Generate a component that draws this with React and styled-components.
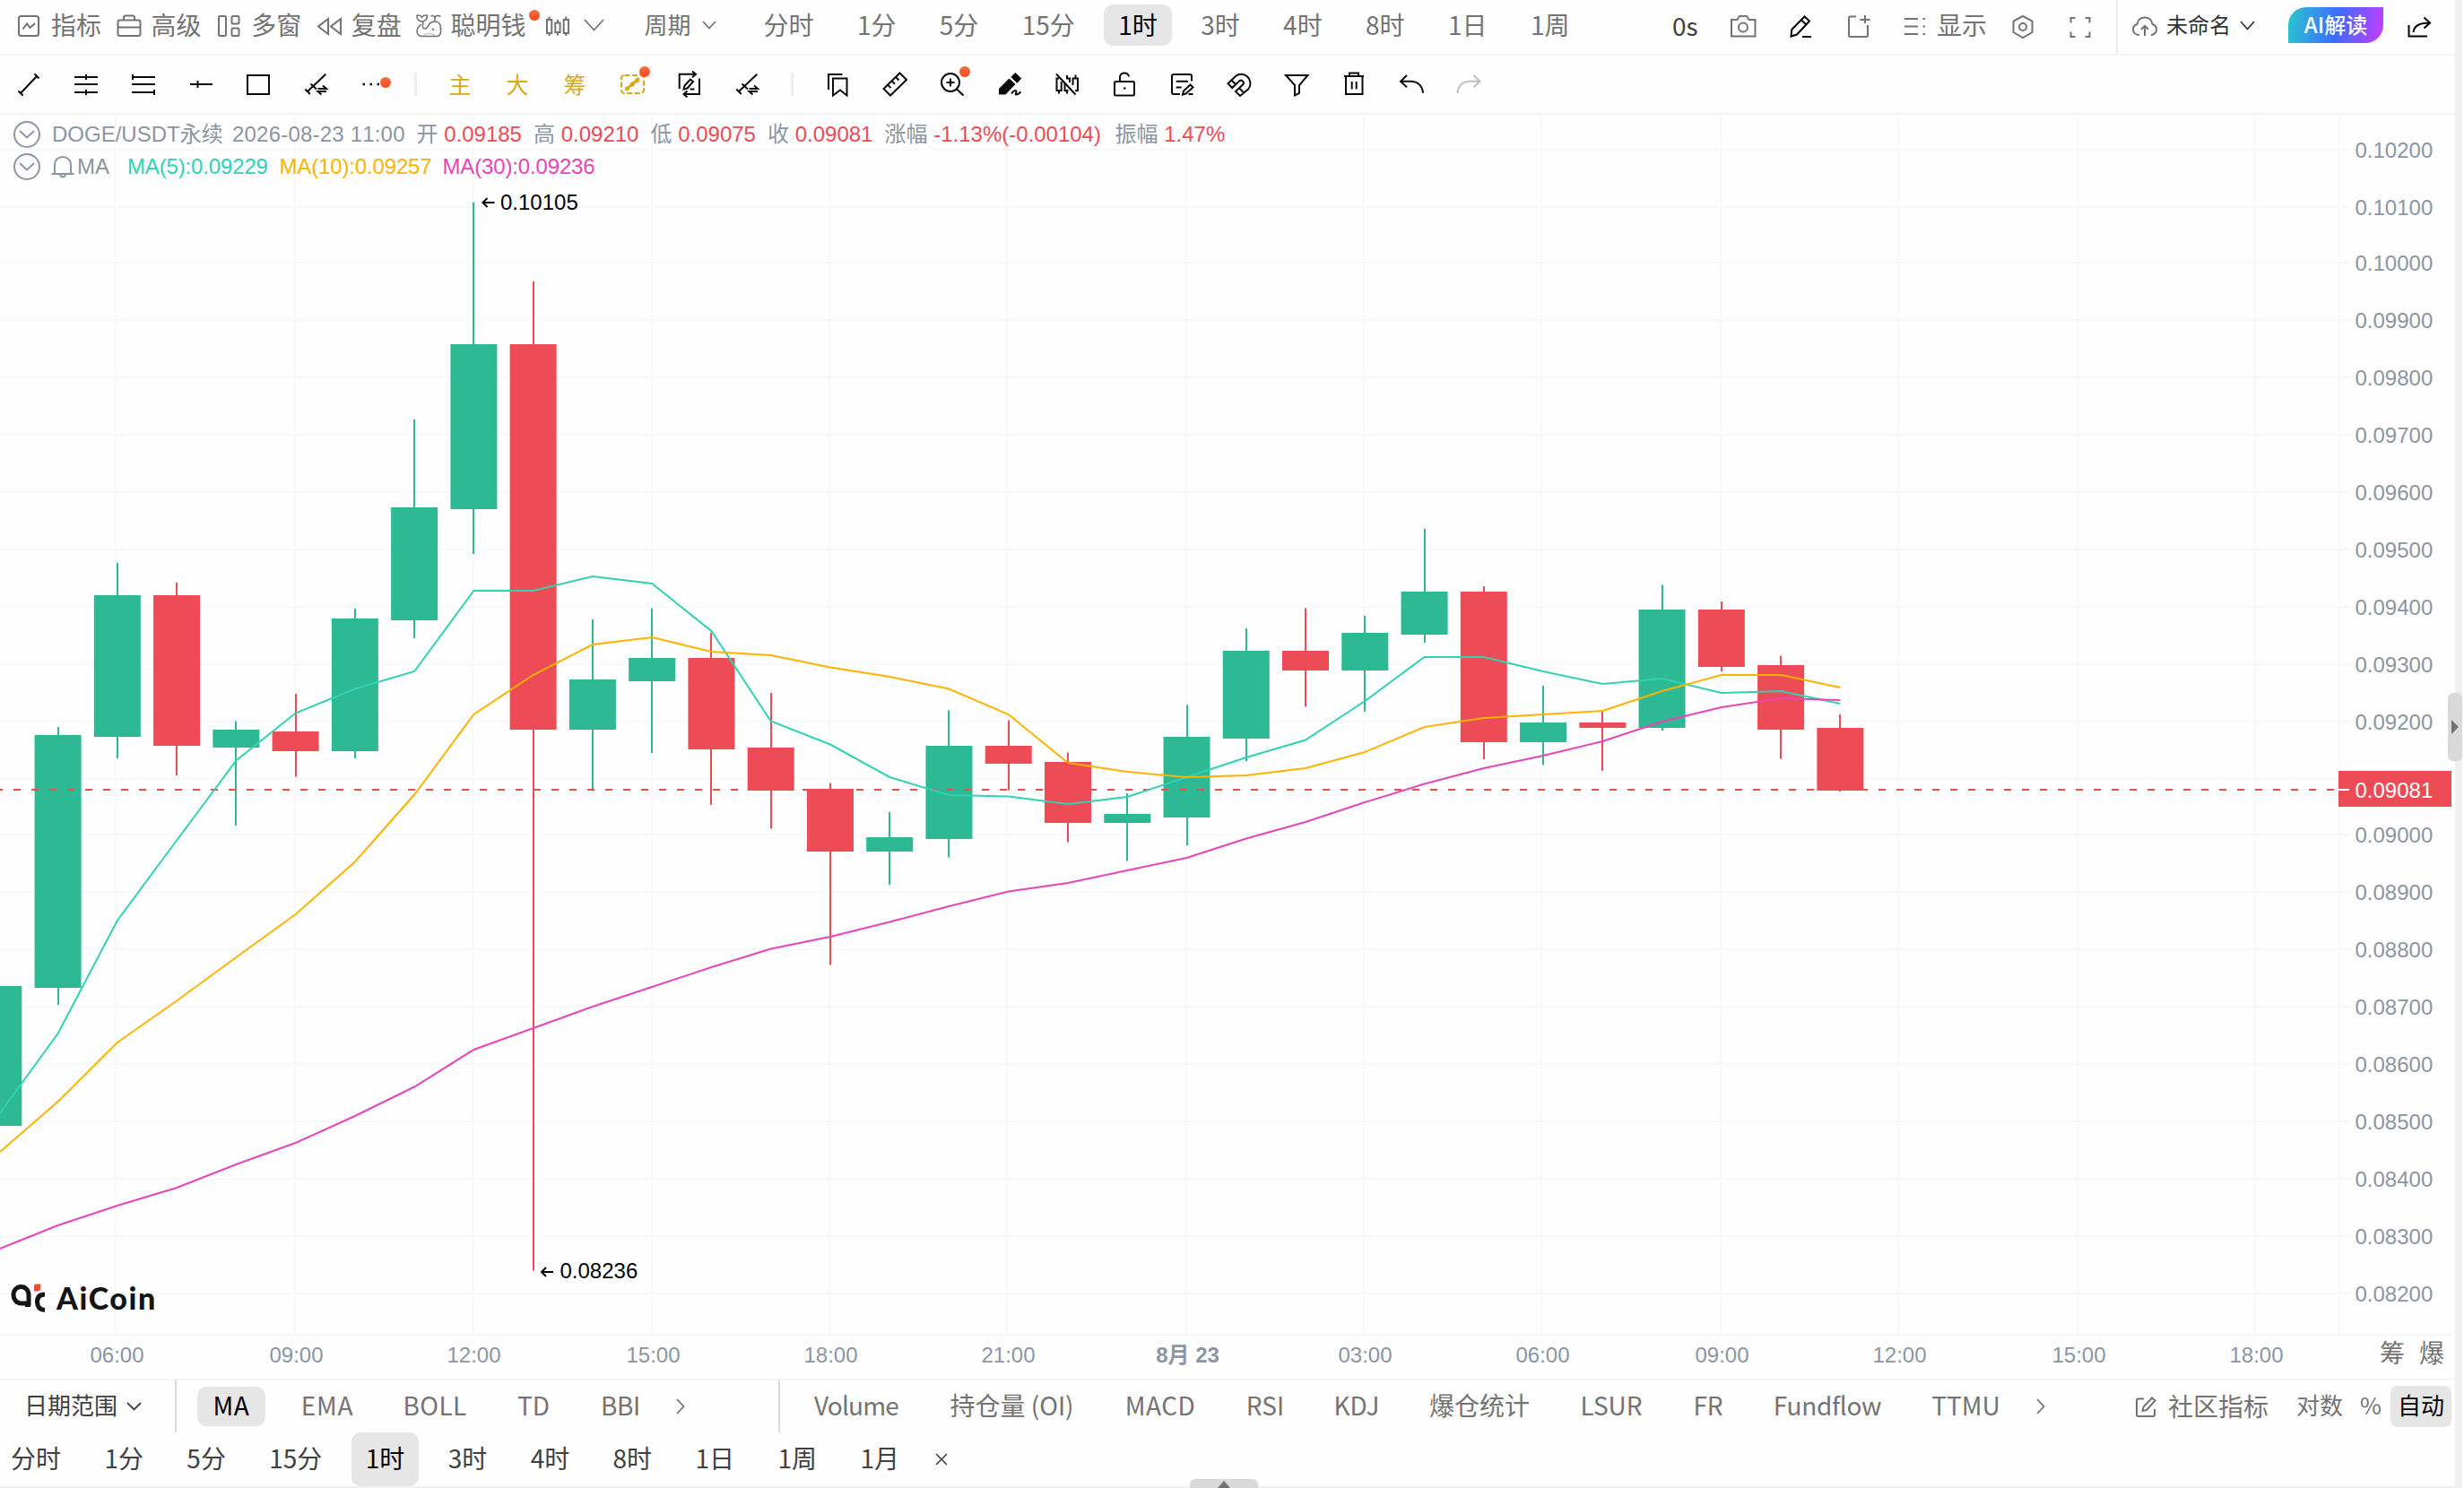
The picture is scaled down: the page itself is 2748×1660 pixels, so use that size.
import styled, { createGlobalStyle } from 'styled-components';
import { useState } from 'react';

const UP = '#2db994';
const DOWN = '#ed4b55';
const GRAY = '#737373';
const AXIS = '#8b95a3';
const GOLD = '#d6a91c';
const MA5 = '#31d2b3';
const MA10 = '#ffb300';
const MA30 = '#e845b8';

const PERIODS = ['分时', '1分', '5分', '15分', '1时', '3时', '4时', '8时', '1日', '1周'];

// [body top, body bottom, high, low, direction], one per hour from 04:00
const CANDLES = [
  [1100, 1256, 1100, 1256, 1],
  [820, 1102, 811, 1121, 1],
  [664, 822, 628, 846, 1],
  [664, 832, 650, 865, 0],
  [814, 834, 804.5, 921, 1],
  [816, 838, 774, 866.5, 0],
  [690, 838, 679, 846, 1],
  [566, 692, 468, 712, 1],
  [384, 568, 225.5, 618, 1],
  [384, 814, 314, 1417.5, 0],
  [758, 814, 691, 882.6, 1],
  [734, 760, 678.5, 840, 1],
  [734, 836, 706, 898, 0],
  [834, 882, 773, 924.5, 0],
  [880, 950, 873.5, 1076.5, 0],
  [934, 950, 906, 987, 1],
  [832, 936, 792.5, 956.5, 1],
  [832, 852, 803.5, 881.5, 0],
  [850, 918, 839.5, 939.5, 0],
  [908, 918, 885, 960.5, 1],
  [822, 912, 786.5, 943, 1],
  [726, 824, 701, 849, 1],
  [726, 748, 678.5, 788.5, 0],
  [706, 748, 687, 794, 1],
  [660, 708, 590, 717, 1],
  [660, 828, 654, 847, 0],
  [806, 828, 765, 853.5, 1],
  [806, 812, 794, 860, 0],
  [680, 812, 652.5, 815, 1],
  [680, 744, 671, 749, 0],
  [742, 814, 731.5, 846.5, 0],
  [812, 882, 797, 883, 0],
];

const LINES = [
  {
    color: MA5,
    points: [
      1244, 1153, 1027, 937.5, 848.5, 795.5, 768.5, 749, 659, 659, 643, 651, 704, 804.5, 830.5, 867, 887, 888.5, 897,
      889, 867, 845, 825.5, 782, 733, 733, 749, 763, 757, 773, 771, 785,
    ],
  },
  {
    color: MA10,
    points: [
      1286.5, 1229, 1163, 1116.5, 1068, 1020, 961.5, 886.5, 797, 753, 719, 711, 727, 731, 744.5, 755, 768.5, 797, 851,
      861, 867, 865, 857, 839, 811, 801, 797, 793, 771, 753, 753, 767,
    ],
  },
  {
    color: MA30,
    points: [
      1393.5, 1367, 1345, 1325, 1299, 1275, 1245, 1212.5, 1171, 1147, 1123, 1101, 1079, 1058.5, 1045, 1028.5, 1011,
      994.5, 985, 971, 957, 935.5, 917, 895, 874.5, 857, 843, 827, 805, 789, 779, 781,
    ],
  },
];

const GRID_Y = [
  167, 231, 293, 357, 421, 485, 549, 613, 677, 741, 805, 869, 931, 995, 1059, 1123, 1187, 1251, 1315, 1379, 1443,
];
const GRID_X = [129, 329, 527, 727, 925, 1123, 1323, 1521, 1719, 1919, 2117, 2317, 2515];
const TIMES = [
  '06:00', '09:00', '12:00', '15:00', '18:00', '21:00', '8月 23', '03:00', '06:00', '09:00', '12:00', '15:00', '18:00',
];
const PRICE_Y = 881;

const barX = (i) => -1.7 + i * 66.26;

const ICONS = {
  indicator: (
    <>
      <rect x="3" y="4" width="22" height="22" rx="2.5" />
      <path d="M7.500 18.500l4.500-6 3.500 4.500 5.500-5" />
    </>
  ),
  briefcase: (
    <>
      <rect x="1.500" y="8.500" width="25" height="17.500" rx="2" />
      <path d="M8 8V5.500a2 2 0 0 1 2-2h8a2 2 0 0 1 2 2V8M1.500 16.500h25" />
    </>
  ),
  windows: (
    <>
      <rect x="3" y="4" width="8" height="22" rx="1.500" />
      <rect x="17.500" y="4" width="8" height="8.500" rx="1.500" />
      <rect x="17.500" y="17.500" width="8" height="8.500" rx="1.500" />
    </>
  ),
  rewind: <path d="M13 7L2 15.500 13 24zM27 7L16 15.500 27 24z" />,
  whale: (
    <>
      <path d="M7 10C3 10 .5 7 1 3.300c2-.6 4.300 0 5.500 2C8 3.300 10.500 2.600 12.500 3.300c0 4-1.800 6-5 6.700.8 3-1 4.500.3 7 1.800 2 4.200 1 5.700-2C15 11.500 18 10 21 10c4 0 6.500 3 6.500 7v4c0 3.500-2 5.500-5 5.500H7c-3.500 0-6-2.500-6-6 0-4 3-5 4.500-7.500" />
      <path d="M21 9.500V6.500c0-2.500-1.500-3.800-4.500-2.500M21 6.500c0-2.500 2.500-4 6.500-2" />
      <path d="M8 25.500c4-2.500 9-2.500 13 0" strokeOpacity="0.35" />
      <circle cx="19" cy="18.700" r="0.400" />
    </>
  ),
  candles: (
    <>
      <rect x="2" y="8" width="5.300" height="15" />
      <rect x="11.300" y="11.500" width="5.300" height="10.500" />
      <rect x="20.700" y="8" width="5.300" height="15" />
      <path d="M4.600 4.500V8m0 15v3M14 8v3.500M14 22v3.500M23.300 4.500V8m0 15v3" />
    </>
  ),
  camera: (
    <>
      <path d="M1 26.500V8h6.500L10 4h8l2.500 4H27.500v18.500z" />
      <circle cx="14" cy="16.500" r="5" />
    </>
  ),
  pencil: <path d="M3.500 26.500l.8-7.500L18.500 4.500l5.500 5L10 24.500zM15 8.500l5.500 5M16 27h10" />,
  addBox: <path d="M11 4.500H4.500a1.500 1.500 0 0 0-1.500 1.500v19.500A1.500 1.500 0 0 0 4.500 27h18a1.500 1.500 0 0 0 1.500-1.500V14M21 3v9M15.500 8h11" />,
  list: <path d="M3 7h15M3 15.500h15M3 24h15M23.500 7h2.500M23.500 15.500h2.500M23.500 24h2.500" />,
  hexagon: (
    <>
      <path d="M14 4l10.500 5.500v12.500L14 28 3.500 22V9.500z" />
      <circle cx="14" cy="16" r="4" />
    </>
  ),
  expand: <path d="M8.500 6H3.500v5.500M19.500 6h5v5.500M8.500 27h-5v-5.500M19.500 27h5v-5.500" />,
  cloud: (
    <path d="M8 25C4 25 1 22.500 1 19c0-3 1.800-5.200 4.500-6C6 8.500 9.500 5.500 14 5.500s8 3 8.500 7.500c2.700.8 4.500 3 4.500 6 0 3.500-3 6-6 6M14 26V15M10 18.800l4-4 4 4" />
  ),
  share: <path d="M2.500 14v12.500H23M7.500 22c.5-7 6-10.500 18.500-10.500M19.500 5.500l6.500 6-6.500 6" />,
  trend: <path d="M5 24L23 5M2.500 21.500l5 5M20.500 2.500l5 5" />,
  rays: <path d="M1 6h26M1 14h26M1 23h26M14 3v6M14 20v6" />,
  segments: <path d="M1 6h26M1 14h26M1 23h26M2 3v6M26 20v6" />,
  horizontal: <path d="M2 14h25M10.500 10v8" />,
  square: <path d="M2 4h24v21H2z" />,
  lineSwap: <path d="M4.500 22.500L25.300 2.700M2.300 19.500l5.500 5.500M8.500 13.500l6.500 6M16.500 19h9.500l-4-3.500M26 22h-9.500l4 3.500" />,
  dots: <path d="M2.500 14h2.500M10.500 14H13M18.500 14H21" />,
  strategy: (
    <>
      <rect x="2" y="4" width="25" height="20" rx="3.500" strokeDasharray="6 2.500" />
      <path d="M8.300 19L20 9" strokeWidth="3" />
      <circle cx="8.300" cy="19" r="1.500" />
      <circle cx="14.200" cy="14" r="1.500" />
      <circle cx="20" cy="9" r="1.500" />
    </>
  ),
  swapDraw: (
    <path d="M2.700 19V2.800H20.500M17-.5l4 3.300-4 3.400M25 7.500V25H8M11.500 21.600L7.500 25l4 3.400M7.500 19.500l1-4 6.500-7 3 2.500-6.500 7.500zM14.500 19.500h5" />
  ),
  bookmark: <path d="M4 20V3h15.500M9 7.500h15.500v19L17 20.500l-8 6z" />,
  ruler: <path d="M19.500 1.500l7.500 7.500L9 26.500 1.500 19zM6 14.600l3.500 3.500M10.500 10.300l3.500 3.500M15 6l3.500 3.500" />,
  zoom: (
    <>
      <circle cx="12" cy="12" r="10" />
      <path d="M19 19.500l7.500 7M7.500 12h9M12 7.500v9" />
    </>
  ),
  marker: (
    <>
      <path d="M20.300 1.500l6.500 6-4.500 4.800-6.500-6.300zM13.500 8l6.500 6L9.500 25H2.500v-6z" fill="currentColor" strokeWidth="1" />
      <path d="M16 24.500c2.500-3.500 5.500-4.500 5.500-2.500s-2 3.500 0 3.500c1.500 0 3-1 5-3" />
    </>
  ),
  hideCandles: (
    <>
      <path d="M7.700 11v10H2.500V7.500H5M5 21v3.500M11.500 13v8h4M14 21v3.500M14 4v3.500h3V12M20.500 15V7.500H26V21h-3M23.500 3.500v4" />
      <path d="M2 2.500l21.500 23" />
    </>
  ),
  lock: (
    <>
      <rect x="3" y="11" width="22" height="15.500" rx="1.500" />
      <path d="M9 10.500V6.500c0-6.500 9-6.500 10-1M13 18.500h2.500" />
    </>
  ),
  note: (
    <path d="M25 10.500V5a2 2 0 0 0-2-2H5a2 2 0 0 0-2 2v18a2 2 0 0 0 2 2h7M7.700 10.700H21M7.700 17.500h6M15 25.500l1-4 7.500-7 3 3-8 7zM21.500 25h5" />
  ),
  magnet: (
    <path d="M1.500 13.300L10 5a10.200 10.200 0 0 1 14.400 14.200L15 27l-5-5 8-7.500c2.500-2.500-1-6.500-4-4L6.200 18zM5.500 9.500l4.700 4.700M14 18.300l5 5" />
  ),
  funnel: <path d="M2 4h24.500L17 15v9l-5 2.500V15z" />,
  trash: <path d="M3 5h22M9 5V1.500h10V5M5 5v20h18.500V5M11.700 11v8.500M16.700 11v8.500" />,
  undo: <path d="M9 4l-7 6.700L9 17.300M2 10.700h11c8 0 13.500 5 14 13" />,
  redo: <path d="M19.500 4l7 6.700-7 6.600M26.500 10.700H15.500C7.500 10.700 2 15.700 1.500 23.700" />,
  compose: <path d="M12 5.500H5.500A1.500 1.500 0 0 0 4 7v16.500A1.500 1.500 0 0 0 5.500 25h17a1.500 1.500 0 0 0 1.500-1.500V17M10.500 19l1-4.500L21 4.500l3.500 3-9.500 10.500z" />,
};

const Icon = ({ name, color, stroke = 2 }) => (
  <IconSvg viewBox="0 0 28 28" stroke={color || 'currentColor'} strokeWidth={stroke}>
    {ICONS[name]}
  </IconSvg>
);

const Chevron = ({ w = 16, h = 8, ml = 0 }) => (
  <ChevronSvg width={w} height={h + 2} $ml={ml} viewBox={`0 0 ${w} ${h + 2}`}>
    <path d={`M1 1L${w / 2} ${h + 0.5} ${w - 1} 1`} />
  </ChevronSvg>
);

const NextArrow = () => (
  <ChevronSvg width="10" height="18" viewBox="0 0 10 18">
    <path d="M1 1l7.500 8L1 17" />
  </ChevronSvg>
);

const PeriodTabs = ({ items, value, onChange, tall }) => (
  <Tabs>
    {items.map((item) => (
      <Tab key={item} $active={item === value} $tall={tall} onClick={() => onChange(item)}>
        {item}
      </Tab>
    ))}
  </Tabs>
);

const Chart = () => (
  <ChartSvg viewBox="0 128 2738 1410">
    <g stroke="#f9f9f9" strokeWidth="2">
      {GRID_Y.map((y) => (
        <path key={y} d={`M0 ${y}H2620`} />
      ))}
      {[...GRID_X, 2609].map((x) => (
        <path key={x} d={`M${x} 130V1488`} />
      ))}
      <path d="M0 1489H2734" stroke="#f6f6f6" />
    </g>
    {CANDLES.map(([top, bottom, high, low, up], i) => {
      const x = Math.round(barX(i));
      return (
        <g key={i} fill={up ? UP : DOWN}>
          <rect x={x - 1} y={high} width="2" height={low - high} />
          <rect x={barX(i) - 26} y={top} width="52" height={bottom - top} />
        </g>
      );
    })}
    <path d={`M-5 ${PRICE_Y}H2607`} stroke={DOWN} strokeWidth="2" strokeDasharray="8 12" />
    {LINES.map(({ color, points }) => (
      <polyline
        key={color}
        points={points.map((y, i) => `${barX(i)},${y}`).join(' ')}
        fill="none"
        stroke={color}
        strokeWidth="2"
      />
    ))}
    <g fill="none" stroke="#000" strokeWidth="2">
      <path d="M551.500 226H538.500M543.500 221l-5 5 5 5" />
      <path d="M617 1419H604M609 1414l-5 5 5 5" />
    </g>
    <AxisText x="558" y="234" $color="#000">
      0.10105
    </AxisText>
    <AxisText x="624.500" y="1426" $color="#000">
      0.08236
    </AxisText>
    {GRID_Y.map((y, i) =>
      // the current price tag takes the place of the label it would cover
      Math.abs(y - PRICE_Y) < 20 ? null : (
        <AxisText key={y} x="2626.500" y={y + 9}>
          {(0.102 - i * 0.001).toFixed(5)}
        </AxisText>
      ),
    )}
    <rect x="2608" y="860" width="126" height="40" fill={DOWN} />
    <path d={`M2608 ${PRICE_Y}h12`} stroke="#fff" strokeWidth="2" />
    <AxisText x="2626.500" y="890" $color="#fff">
      0.09081
    </AxisText>
    {TIMES.map((time, i) => (
      <AxisText key={i} x={GRID_X[i] + 1.5} y="1520" $middle $bold={time.includes('月')}>
        {time}
      </AxisText>
    ))}
  </ChartSvg>
);

const App = () => {
  const [period, setPeriod] = useState('1时');
  const [mainIndicator, setMainIndicator] = useState('MA');

  return (
    <Page>
      <GlobalStyle />
      <Main>
        <TopBar>
          <Menu>
            <MenuItem>
              <Icon name="indicator" />
              <span>指标</span>
            </MenuItem>
            <MenuItem>
              <Icon name="briefcase" />
              <span>高级</span>
            </MenuItem>
            <MenuItem>
              <Icon name="windows" />
              <span>多窗</span>
            </MenuItem>
            <MenuItem>
              <Icon name="rewind" />
              <span>复盘</span>
            </MenuItem>
            <MenuItem $gap={10}>
              <Icon name="whale" stroke={1.6} />
              <span>聪明钱</span>
              <Badge $right={-16} />
            </MenuItem>
          </Menu>
          <Slot $w={43} $ml={22}>
            <Icon name="candles" />
          </Slot>
          <Chevron w={23} h={12} />
          <Dropdown $size={26} $ml={44}>
            <span>周期</span>
            <Chevron ml={13} />
          </Dropdown>
          <PeriodWrap>
            <PeriodTabs items={PERIODS} value={period} onChange={setPeriod} />
          </PeriodWrap>
          <TopRight>
            <Slot $w={65} $color="#404040">
              0s
            </Slot>
            <Slot $w={64}>
              <Icon name="camera" />
            </Slot>
            <Slot $w={65} $color="#000">
              <Icon name="pencil" />
            </Slot>
            <Slot $w={62}>
              <Icon name="addBox" />
            </Slot>
            <Slot $w={121}>
              <MenuItem>
                <Icon name="list" />
                <span>显示</span>
              </MenuItem>
            </Slot>
            <Slot $w={64}>
              <Icon name="hexagon" />
            </Slot>
            <Slot $w={54}>
              <Icon name="expand" />
            </Slot>
            <FullDivider />
            <Slot $ml={16}>
              <Icon name="cloud" />
            </Slot>
            <Dropdown $size={24} $ml={10} $color="#333">
              <span>未命名</span>
              <Chevron w={17} h={9} ml={10} />
            </Dropdown>
            <AiButton>
              <span>AI解读</span>
            </AiButton>
            <Slot $ml={26} $color="#000">
              <Icon name="share" />
            </Slot>
          </TopRight>
        </TopBar>

        <ToolBar>
          {['trend', 'rays', 'segments', 'horizontal', 'square', 'lineSwap'].map((name) => (
            <Tool key={name}>
              <Icon name={name} />
            </Tool>
          ))}
          <Tool>
            <Icon name="dots" stroke={2.5} />
            <Badge $right={12} $top={-6} />
          </Tool>
          <ToolDivider $ml={14} $mr={16} />
          {['主', '大', '筹'].map((text) => (
            <Tool key={text} $color={GOLD}>
              <span>{text}</span>
            </Tool>
          ))}
          <Tool $color={GOLD}>
            <Icon name="strategy" />
            <Badge $right={12} $top={-18} />
          </Tool>
          <Tool>
            <Icon name="swapDraw" />
          </Tool>
          <Tool>
            <Icon name="lineSwap" />
          </Tool>
          <ToolDivider $ml={17} $mr={17} />
          <Tool>
            <Icon name="bookmark" />
          </Tool>
          <Tool>
            <Icon name="ruler" />
          </Tool>
          <Tool>
            <Icon name="zoom" />
            <Badge $right={12} $top={-18} />
          </Tool>
          {['marker', 'hideCandles', 'lock', 'note', 'magnet', 'funnel', 'trash', 'undo'].map((name) => (
            <Tool key={name}>
              <Icon name={name} />
            </Tool>
          ))}
          <Tool $color="#bfbfbf">
            <Icon name="redo" />
          </Tool>
        </ToolBar>

        <ChartArea>
          <Chart />
          <Legend>
            <LegendRow>
              <Toggle>
                <Chevron w={18} h={8} />
              </Toggle>
              <LegendText $w={201}>DOGE/USDT永续</LegendText>
              <LegendText $w={205.500} $spacing={0.2}>
                2026-08-23 11:00
              </LegendText>
              {[
                ['开', '0.09185', 130.5],
                ['高', '0.09210', 130.5],
                ['低', '0.09075', 130.5],
                ['收', '0.09081', 130.5],
                ['涨幅', '-1.13%(-0.00104)', 257],
                ['振幅', '1.47%', 130],
              ].map(([label, value, w]) => (
                <LegendText key={label} $w={w}>
                  {label} <Value>{value}</Value>
                </LegendText>
              ))}
            </LegendRow>
            <LegendRow>
              <Toggle>
                <Chevron w={18} h={8} />
              </Toggle>
              <Bell viewBox="0 0 28 28">
                <path d="M1.500 22h25M5 22V12c0-12 18-12 18 0v10M11 22c0 4.500 6 4.500 6 0" />
              </Bell>
              <LegendText $w={56}>MA</LegendText>
              <LegendText $w={169.500} $color={MA5} $spacing={-0.15}>
                MA(5):0.09229
              </LegendText>
              <LegendText $w={182} $color={MA10} $spacing={-0.15}>
                MA(10):0.09257
              </LegendText>
              <LegendText $w={182} $color={MA30} $spacing={-0.15}>
                MA(30):0.09236
              </LegendText>
            </LegendRow>
          </Legend>
          <Brand>
            <svg width="40" height="32" viewBox="0 0 40 32" fill="none">
              <path d="M11.500 3.500c-5 0-8.500 4-8.500 9s3.500 9.500 8.500 9.500H20V12.500c0-5-3.500-9-8.500-9z" stroke="#141414" strokeWidth="5" />
              <path d="M22 24.500h-6" stroke="#141414" strokeWidth="3" />
              <path d="M38 12c-5.500 0-8.500 3-8.500 8.500S32 29 38 29.500" stroke="#141414" strokeWidth="5" />
              <path d="M26 2.500C26 1.500 27 .5 28 .5h5v5c0 2-1 3-3 3h-4z" fill="#ef4d2f" />
            </svg>
            <span>AiCoin</span>
          </Brand>
          <Corner>
            <span>筹</span>
            <span>爆</span>
          </Corner>
        </ChartArea>

        <IndicatorBar>
          <RangePicker>
            <span>日期范围</span>
            <Chevron w={17} ml={10} />
          </RangePicker>
          <IndicatorGroup $w={673} $pl={23}>
            {[
              ['MA', 76, 0.6],
              ['EMA', 90, 0.8],
              ['BOLL', 102, 0.3],
              ['TD', 70, 0],
              ['BBI', 76, -0.4],
            ].map(([name, w, spacing]) => (
              <Indicator
                key={name}
                $w={w}
                $spacing={spacing}
                $active={name === mainIndicator}
                onClick={() => setMainIndicator(name)}
              >
                <span>{name}</span>
              </Indicator>
            ))}
            <NextArrow />
          </IndicatorGroup>
          <IndicatorGroup $pl={21}>
            {[
              ['Volume', 128, -0.8],
              ['持仓量 (OI)', 171, 0],
              ['MACD', 112, 0.5],
              ['RSI', 74, 0],
              ['KDJ', 82, 0],
              ['爆仓统计', 144, 0],
              ['LSUR', 102, 0],
              ['FR', 66, 0],
              ['Fundflow', 152, -0.3],
              ['TTMU', 109, 0],
            ].map(([name, w, spacing]) => (
              <Indicator key={name} $w={w} $spacing={spacing}>
                <span>{name}</span>
              </Indicator>
            ))}
            <NextArrow />
          </IndicatorGroup>
          <ScaleGroup>
            <MenuItem>
              <Icon name="compose" />
              <span>社区指标</span>
            </MenuItem>
            <ScaleText $ml={31}>对数</ScaleText>
            <ScaleText $ml={19}>%</ScaleText>
            <AutoButton>
              <span>自动</span>
            </AutoButton>
          </ScaleGroup>
        </IndicatorBar>

        <BottomBar>
          <PeriodTabs items={[...PERIODS, '1月']} value={period} onChange={setPeriod} tall />
          <CloseSvg viewBox="0 0 14 14">
            <path d="M1 1l12 12M13 1L1 13" />
          </CloseSvg>
          <BottomHandle>
            <svg width="14" height="8" viewBox="0 0 14 8">
              <path d="M7 0l7 8H0z" fill={GRAY} />
            </svg>
          </BottomHandle>
        </BottomBar>
      </Main>
      <SideStrip>
        <SideHandle>
          <svg width="8" height="16" viewBox="0 0 8 16">
            <path d="M0 0l8 8-8 8z" fill={GRAY} />
          </svg>
        </SideHandle>
      </SideStrip>
    </Page>
  );
};

export default App;

const GlobalStyle = createGlobalStyle`
  body {
    margin: 0;
    background: #fefefe;
  }
  * {
    box-sizing: border-box;
  }
`;
const Page = styled.div`
  display: flex;
  width: 2748px;
  height: 1660px;
  overflow: hidden;
  background: #fefefe;
  color: ${GRAY};
  font-family: 'Noto Sans CJK SC', sans-serif;
  font-size: 28px;
  line-height: 40px;
  white-space: nowrap;
`;
const Main = styled.div`
  display: flex;
  flex-direction: column;
  flex: none;
  width: 2738px;
`;
const IconSvg = styled.svg`
  flex: none;
  width: 28px;
  height: 28px;
  fill: none;
  overflow: visible;
`;
const ChevronSvg = styled.svg`
  flex: none;
  margin-left: ${({ $ml }) => $ml || 0}px;
  fill: none;
  stroke: currentColor;
  stroke-width: 1.8;
`;
const TopBar = styled.div`
  display: flex;
  align-items: center;
  height: 62px;
  padding: 0 26px 4px 18px;
  border-bottom: 2px solid #f4f4f4;
`;
const Menu = styled.div`
  display: flex;
  gap: 16.6px;
`;
const MenuItem = styled.div`
  position: relative;
  display: flex;
  align-items: center;
  gap: ${({ $gap }) => $gap || 11}px;

  span {
    margin-top: -2px;
  }
`;
const Badge = styled.i`
  position: absolute;
  right: ${({ $right }) => $right}px;
  top: calc(${({ $top }) => $top || 0}px + 50% - 2px);
  width: 12px;
  height: 12px;
  border-radius: 50%;
  background: linear-gradient(#ee6f3c, #ff4820);

  ${MenuItem} & {
    top: 2px;
  }
`;
const Slot = styled.div`
  display: flex;
  align-items: center;
  flex: none;
  width: ${({ $w }) => ($w ? `${$w}px` : 'auto')};
  margin-left: ${({ $ml }) => $ml || 0}px;
  color: ${({ $color }) => $color || GRAY};
`;
const Dropdown = styled.div`
  display: flex;
  align-items: center;
  margin-left: ${({ $ml }) => $ml}px;
  color: ${({ $color }) => $color || GRAY};
  font-size: ${({ $size }) => $size}px;

  span {
    margin-top: -2px;
  }
`;
const PeriodWrap = styled.div`
  margin-left: 36px;
`;
const Tabs = styled.div`
  display: flex;
  gap: 16.4px;
`;
const Tab = styled.button`
  height: ${({ $tall }) => ($tall ? 60 : 46)}px;
  padding: 0 16px ${({ $tall }) => ($tall ? 4 : 3)}px;
  border: none;
  border-radius: 10px;
  background: ${({ $active }) => ($active ? '#e6e6e6' : 'transparent')};
  color: ${({ $active, $tall }) => ($active ? '#000' : $tall ? '#404040' : GRAY)};
  font: inherit;
`;
const TopRight = styled.div`
  display: flex;
  align-items: center;
  margin-left: auto;
`;
const FullDivider = styled.div`
  width: 2px;
  height: 60px;
  margin: 0 0 -4px;
  background: #ebebeb;
`;
const AiButton = styled.button`
  width: 106px;
  height: 40px;
  margin-left: 37px;
  padding: 0;
  border: none;
  border-radius: 20px 0 20px 0;
  background: linear-gradient(100deg, #2bc8cd, #3a6dff 50%, #c93bff);
  color: #fff;
  font: inherit;
  font-weight: 500;
  font-size: 24px;
  line-height: 34px;

  span {
    display: block;
    margin-top: -3px;
  }
`;
const ToolBar = styled.div`
  display: flex;
  align-items: center;
  height: 66px;
  border-bottom: 2px solid #f4f4f4;
`;
const Tool = styled.div`
  position: relative;
  display: flex;
  align-items: center;
  justify-content: center;
  width: 64px;
  height: 64px;
  color: ${({ $color }) => $color || '#0a0a0a'};
  font-size: 25px;

  span {
    margin-top: -2px;
  }
`;
const ToolDivider = styled.div`
  width: 3px;
  height: 26px;
  margin: 0 ${({ $mr }) => $mr}px 0 ${({ $ml }) => $ml}px;
  background: #ededed;
`;
const ChartArea = styled.div`
  position: relative;
  height: 1410px;
`;
const ChartSvg = styled.svg`
  display: block;
  width: 2738px;
  height: 1410px;
`;
const AxisText = styled.text`
  fill: ${({ $color }) => $color || AXIS};
  font-family: 'Liberation Sans', 'Noto Sans CJK SC', sans-serif;
  font-size: 24px;
  font-weight: ${({ $bold }) => ($bold ? 700 : 400)};
  font-kerning: none;
  text-anchor: ${({ $middle }) => ($middle ? 'middle' : 'start')};
`;
const Legend = styled.div`
  position: absolute;
  left: 15px;
  top: 4px;
`;
const LegendRow = styled.div`
  display: flex;
  align-items: center;
  height: 36px;
`;
const Toggle = styled.div`
  display: flex;
  align-items: center;
  justify-content: center;
  width: 30px;
  height: 30px;
  margin-right: 13px;
  border: 2px solid ${AXIS};
  border-radius: 50%;
  color: ${AXIS};
`;
const Bell = styled.svg`
  width: 28px;
  height: 28px;
  margin-right: 2px;
  margin-left: -2px;
  fill: none;
  stroke: ${AXIS};
  stroke-width: 2;
`;
const LegendText = styled.div`
  flex: none;
  width: ${({ $w }) => $w}px;
  color: ${({ $color }) => $color || AXIS};
  font-family: 'Liberation Sans', 'Noto Sans CJK SC', sans-serif;
  font-size: 24px;
  font-kerning: none;
  letter-spacing: ${({ $spacing }) => $spacing || 0}px;
  line-height: 36px;
`;
const Value = styled.span`
  color: ${DOWN};
`;
const Brand = styled.div`
  position: absolute;
  left: 12px;
  bottom: 70px;
  display: flex;
  align-items: center;
  gap: 11px;
  color: #141414;
  font-family: Lato, sans-serif;
  font-size: 34px;
  font-weight: 900;
  letter-spacing: 1.6px;
`;
const Corner = styled.div`
  position: absolute;
  right: 12px;
  bottom: 10px;
  display: flex;
  gap: 16px;
`;
const IndicatorBar = styled.div`
  display: flex;
  height: 60px;
  border-top: 2px solid #f4f4f4;
`;
const RangePicker = styled.div`
  display: flex;
  align-items: center;
  width: 197px;
  padding-left: 27px;
  border-right: 2px solid #d9d9d9;
  color: #404040;
  font-size: 26px;

  span {
    margin-top: -4px;
  }
`;
const IndicatorGroup = styled.div`
  display: flex;
  align-items: center;
  gap: 24px;
  width: ${({ $w }) => ($w ? `${$w}px` : 'auto')};
  padding-left: ${({ $pl }) => $pl}px;
  border-right: ${({ $w }) => ($w ? '2px solid #d9d9d9' : 'none')};
`;
const Indicator = styled.button`
  flex: none;
  width: ${({ $w }) => $w}px;
  height: 44px;
  padding: 0;
  border: none;
  border-radius: 10px;
  background: ${({ $active }) => ($active ? '#e6e6e6' : 'transparent')};
  color: ${({ $active }) => ($active ? '#000' : GRAY)};
  font: inherit;
  letter-spacing: ${({ $spacing }) => $spacing}px;

  span {
    display: block;
    margin-top: -4px;
  }
`;
const ScaleGroup = styled.div`
  display: flex;
  align-items: center;
  margin-left: auto;
  padding-right: 4px;
`;
const ScaleText = styled.span`
  margin-top: -4px;
  margin-left: ${({ $ml }) => $ml}px;
  font-size: 26px;
`;
const AutoButton = styled.button`
  width: 68px;
  height: 46px;
  margin-left: 10px;
  padding: 0;
  border: none;
  border-radius: 8px;
  background: #e6e6e6;
  color: #000;
  font: inherit;
  font-size: 26px;

  span {
    display: block;
    margin-top: -4px;
  }
`;
const BottomBar = styled.div`
  position: relative;
  display: flex;
  align-items: center;
  height: 62px;
  padding-right: 4px;
  border-bottom: 2px solid #f0f0f0;

  ${Tabs} {
    margin-left: -4px;
  }
`;
const CloseSvg = styled.svg`
  width: 14px;
  height: 14px;
  margin-left: 24px;
  fill: none;
  stroke: #404040;
  stroke-width: 1.6;
`;
const BottomHandle = styled.div`
  position: absolute;
  left: 1327px;
  bottom: -2px;
  display: flex;
  align-items: flex-end;
  justify-content: center;
  width: 76px;
  height: 10px;
  border-radius: 6px 6px 0 0;
  background: #d9d9d9;
`;
const SideStrip = styled.div`
  position: relative;
  width: 8px;
  background: #f0f0f0;
`;
const SideHandle = styled.div`
  position: absolute;
  right: 0;
  top: 773px;
  display: flex;
  align-items: center;
  width: 16px;
  height: 76px;
  padding-left: 4px;
  border-radius: 6px;
  background: #d9d9d9;
`;
